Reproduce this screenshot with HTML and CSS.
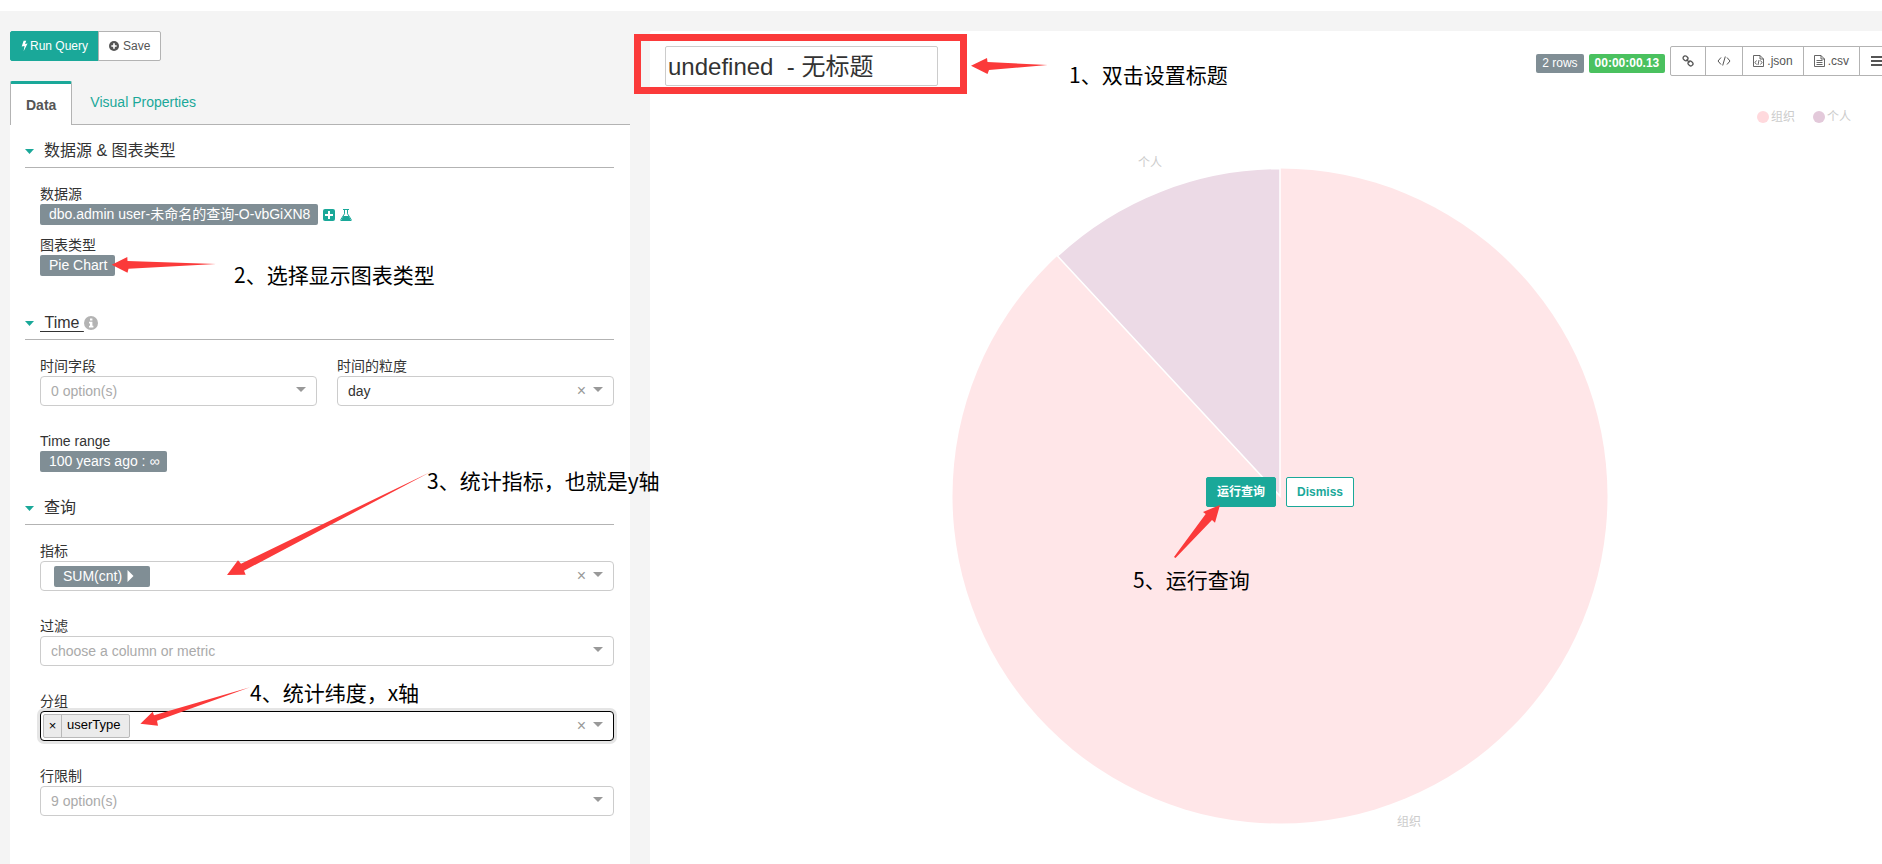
FILE: index.html
```html
<!DOCTYPE html>
<html lang="zh">
<head>
<meta charset="utf-8">
<title>undefined - 无标题</title>
<link rel="stylesheet" href="styles.css">
</head>
<body>
<main class="page">
  <section class="controls">
    <div class="btn-group">
      <button class="btn btn-primary" type="button"><svg class="bolt" width="7" height="12" viewBox="0 0 8 12"><path d="M3 0h3L4.600 3.600 7.500 3 3 12l1-6L.8 6.700z" fill="currentColor"/></svg>Run Query</button>
      <button class="btn" type="button"><svg width="10" height="10" viewBox="0 0 12 12"><circle cx="6" cy="6" r="6" fill="currentColor"/><path d="M6 2.800v6.400M2.800 6h6.400" stroke="#fff" stroke-width="2"/></svg>Save</button>
    </div>
    <nav class="tabs">
      <a class="tab active" href="#data">Data</a>
      <a class="tab" href="#visual">Visual Properties</a>
    </nav>
    <div class="panel">
      <section class="group group-source">
        <h2 class="group-title"><svg class="caret" width="9" height="5" viewBox="0 0 9 5"><path d="M0 0h9L4.500 5z" fill="currentColor"/></svg><span>数据源 &amp; 图表类型</span></h2>
        <div class="group-body tight">
          <div class="field">
            <span class="label">数据源</span>
            <div class="badge-row">
              <button class="badge" type="button">dbo.admin user-未命名的查询-O-vbGiXN8</button>
              <svg width="12" height="12" viewBox="0 0 12 12"><rect width="12" height="12" rx="2" fill="#1aa899"/><path d="M6 2v8M2 6h8" stroke="#fff" stroke-width="2"/></svg>
              <svg width="12" height="12" viewBox="0 0 12 12"><path d="M3 .5h6M4.500 .5v4.300L.8 10.500v1h10.400v-1L7.500 4.800V.5" fill="none" stroke="#1aa899"/><path d="M3.300 7h5.400l2.300 4.500H1z" fill="#1aa899"/></svg>
            </div>
          </div>
          <div class="field">
            <span class="label">图表类型</span>
            <div class="badge-row"><button class="badge" type="button">Pie Chart</button></div>
          </div>
        </div>
      </section>

      <section class="group">
        <h2 class="group-title"><svg class="caret" width="9" height="5" viewBox="0 0 9 5"><path d="M0 0h9L4.500 5z" fill="currentColor"/></svg><span class="underlined">&nbsp;Time&nbsp;</span><svg width="14" height="14" viewBox="0 0 14 14"><circle cx="7" cy="7" r="7" fill="#b3b3b3"/><path d="M6 2.500h2.400v2H6zM5 5.800h3.400v4h1v1.700H5V9.800h1V7.500H5z" fill="#fff"/></svg></h2>
        <div class="group-body">
          <div class="columns">
            <div class="field">
              <label class="label" for="time-column">时间字段</label>
              <div class="select">
                <select id="time-column" class="muted"><option>0 option(s)</option></select>
                <svg class="arrow" width="10" height="5" viewBox="0 0 10 5"><path d="M0 0h10L5 5z" fill="#999"/></svg>
              </div>
            </div>
            <div class="field">
              <label class="label" for="grain">时间的粒度</label>
              <div class="select">
                <select id="grain"><option>day</option></select>
                <button class="clear" type="button" aria-label="Clear">×</button>
                <svg class="arrow" width="10" height="5" viewBox="0 0 10 5"><path d="M0 0h10L5 5z" fill="#999"/></svg>
              </div>
            </div>
          </div>
          <div class="field">
            <span class="label">Time range</span>
            <div class="badge-row"><button class="badge" type="button">100 years ago : ∞</button></div>
          </div>
        </div>
      </section>

      <section class="group">
        <h2 class="group-title"><svg class="caret" width="9" height="5" viewBox="0 0 9 5"><path d="M0 0h9L4.500 5z" fill="currentColor"/></svg><span>查询</span></h2>
        <div class="group-body">
          <div class="field">
            <label class="label" for="metric">指标</label>
            <div class="select">
              <button class="badge metric" type="button">SUM(cnt)<svg width="7" height="12" viewBox="0 0 6 12"><path d="M0 0l6 6-6 6z" fill="#fff"/></svg></button>
              <input id="metric" type="text">
              <button class="clear" type="button" aria-label="Clear">×</button>
              <svg class="arrow" width="10" height="5" viewBox="0 0 10 5"><path d="M0 0h10L5 5z" fill="#999"/></svg>
            </div>
          </div>
          <div class="field">
            <label class="label" for="filter">过滤</label>
            <div class="select">
              <select id="filter" class="muted"><option>choose a column or metric</option></select>
              <svg class="arrow" width="10" height="5" viewBox="0 0 10 5"><path d="M0 0h10L5 5z" fill="#999"/></svg>
            </div>
          </div>
          <div class="field">
            <label class="label" for="groupby">分组</label>
            <div class="select focused">
              <span class="tag"><button type="button" aria-label="Remove">×</button><span>userType</span></span>
              <input id="groupby" type="text">
              <button class="clear" type="button" aria-label="Clear">×</button>
              <svg class="arrow" width="10" height="5" viewBox="0 0 10 5"><path d="M0 0h10L5 5z" fill="#999"/></svg>
            </div>
          </div>
          <div class="field">
            <label class="label" for="limit">行限制</label>
            <div class="select">
              <select id="limit" class="muted"><option>9 option(s)</option></select>
              <svg class="arrow" width="10" height="5" viewBox="0 0 10 5"><path d="M0 0h10L5 5z" fill="#999"/></svg>
            </div>
          </div>
        </div>
      </section>
    </div>
  </section>

  <section class="card">
    <header class="card-header">
      <input class="title" type="text" aria-label="标题" value="undefined&nbsp; - 无标题">
      <div class="actions">
        <span class="stat">2 rows</span>
        <span class="stat stat-time">00:00:00.13</span>
        <div class="btn-group">
          <button class="btn btn-icon" type="button" aria-label="Link"><svg width="12" height="12" viewBox="0 0 12 12"><g fill="none" stroke="currentColor" stroke-width="1.300"><rect x="1" y="1.200" width="5" height="4.200" rx="2" transform="rotate(40 3.500 3.300)"/><rect x="6" y="6.400" width="5" height="4.200" rx="2" transform="rotate(40 8.500 8.500)"/><path d="M4.500 4.500l3 3"/></g></svg></button>
          <button class="btn btn-icon" type="button" aria-label="Embed"><svg width="14" height="12" viewBox="0 0 14 12"><path d="M4 2.500L1 6l3 3.500M10 2.500L13 6l-3 3.500M8.300 1.500l-2.600 9" fill="none" stroke="currentColor"/></svg></button>
          <button class="btn" type="button"><svg width="11" height="12" viewBox="0 0 11 12"><path d="M.5.5h6.500l3.500 3.500v7.500H.5zM7 .5V4h3.500M3.500 5.500L2 7.500l1.500 2M7.500 5.500L9 7.500l-1.500 2M6 5l-1 5" fill="none" stroke="currentColor" stroke-width=".9"/></svg>.json</button>
          <button class="btn" type="button"><svg width="11" height="12" viewBox="0 0 11 12"><path d="M.5.5h6.500l3.500 3.500v7.500H.5zM7 .5V4h3.500M2.500 5.500h6M2.500 7.500h6M2.500 9.500h6" fill="none" stroke="currentColor" stroke-width=".9"/></svg>.csv</button>
          <button class="btn btn-icon" type="button" aria-label="Menu"><svg width="12" height="10" viewBox="0 0 12 10"><path d="M0 1h12M0 5h12M0 9h12" stroke="currentColor" stroke-width="2"/></svg></button>
        </div>
      </div>
    </header>
    <ul class="legend">
      <li><i class="dot dot-org"></i>组织</li>
      <li><i class="dot dot-person"></i>个人</li>
    </ul>
    <div class="chart">
      <svg width="720" height="720" viewBox="0 0 720 720">
        <circle cx="360" cy="360" r="327.500" fill="#ffe6e8"/>
        <path d="M360 360V32.500A327.500 327.500 0 0 0 137.500 120z" fill="#ecdae6" stroke="#fff" stroke-width="1.500"/>
        <text class="slice-label" x="218" y="31">个人</text>
        <text class="slice-label" x="477" y="690">组织</text>
      </svg>
      <div class="overlay">
        <button class="btn btn-primary strong" type="button">运行查询</button>
        <button class="btn btn-outline strong" type="button">Dismiss</button>
      </div>
    </div>
  </section>

  <div class="notes">
    <svg class="arrows" width="1250" height="740" viewBox="0 0 1250 740" fill="#fb3a3a">
      <path d="M637.500 37.500h326v53h-326z" fill="none" stroke="#fb3a3a" stroke-width="7"/>
      <path d="M971 65.700L987 58l.5 4 60 3-58.500 5-1.500 4z"/>
      <path d="M111.700 264.700L127.300 257l.2 4 88.500 3-87.500 4.700-1 4z"/>
      <path d="M227 575l11-14.700 3 3.400 190-92-187 99 1.700 4z"/>
      <path d="M140.400 723.700l12.300-12 1.300 3.600 96-28-93 33.400 1 5z"/>
      <path d="M1220 505l-17 7 2.700 2-31.700 43 1.500 1L1212 520l3 2.700z"/>
    </svg>
    <p class="note note-1">1、双击设置标题</p>
    <p class="note note-2">2、选择显示图表类型</p>
    <p class="note note-3">3、统计指标，也就是y轴</p>
    <p class="note note-4">4、统计纬度，x轴</p>
    <p class="note note-5">5、运行查询</p>
  </div>
</main>
</body>
</html>
```

FILE: styles.css
```css
* { box-sizing: border-box; }

body {
  margin: 0;
  background: #f4f4f4;
  border-top: 11px solid #fff;
  color: #333;
  font: 14px/20px "Liberation Sans", Arial, "Noto Sans CJK SC", sans-serif;
  overflow: hidden;
}

button, input, select { font: inherit; color: inherit; margin: 0; }
h2, p, ul { margin: 0; padding: 0; }

.page {
  display: grid;
  grid-template-columns: minmax(0, 155fr) minmax(0, 308fr);
  gap: 20px;
  min-height: calc(100vh - 11px);
  padding: 20px 0 0 10px;
}

.controls { display: flex; flex-direction: column; }

/* Buttons */
.btn-group { display: flex; }
.btn {
  display: inline-flex;
  align-items: center;
  justify-content: center;
  gap: 4px;
  height: 30px;
  padding: 0 10px;
  border: 1px solid #b3b3b3;
  background: #fff;
  color: #555;
  font-size: 12px;
  line-height: 18px;
  white-space: nowrap;
}
.btn-group .btn + .btn { margin-left: -1px; }
.btn-group .btn:first-child { border-radius: 2px 0 0 2px; }
.btn-group .btn:last-child { border-radius: 0 2px 2px 0; }
.btn-primary { background: #1aa899; border-color: #1aa899; color: #fff; }
.btn-outline { border-color: #1aa899; color: #1aa899; }
.strong { border-radius: 2px; font-weight: bold; }
.bolt { margin-right: -2px; }

/* Tabs */
.tabs {
  display: flex;
  margin-top: 20px;
  border-bottom: 1px solid #b3b3b3;
}
.tab {
  padding: 11px 18px;
  color: #1aa899;
  text-decoration: none;
}
.tab.active {
  margin-bottom: -1px;
  padding: 11px 15px 10px;
  border: 1px solid #b3b3b3;
  border-top: 3px solid #1aa899;
  border-bottom: 0;
  border-radius: 2px 2px 0 0;
  background: #fff;
  color: #555;
  font-weight: bold;
}

/* Control groups */
.panel { flex: 1; padding: 14px 16px 14px 15px; background: #fff; }
.group { margin-bottom: 24px; }
.group-source { margin-bottom: 35px; }
.group-title {
  display: flex;
  align-items: center;
  padding: 1px 0 5px;
  border-bottom: 1px solid #b3b3b3;
  font-size: 16px;
  font-weight: normal;
  line-height: 22px;
}
.caret { margin-right: 10px; color: #1aa899; }
.underlined { margin-left: -4px; text-decoration: underline; text-underline-offset: 3px; }
.group-body {
  display: flex;
  flex-direction: column;
  gap: 25px;
  padding: 16px 0 0 15px;
}
.group-body.tight { gap: 10px; }
.columns { display: grid; grid-template-columns: 1fr 1fr; gap: 20px; }
.label { display: block; }
.badge-row { display: flex; align-items: center; gap: 5px; }
.badge {
  height: 21px;
  padding: 0 8px 1px 9px;
  border: 0;
  border-radius: 2px;
  background: #808e95;
  color: #fff;
  white-space: nowrap;
}

/* Select boxes */
.select {
  display: flex;
  align-items: center;
  height: 30px;
  border: 1px solid #ccc;
  border-radius: 4px;
  background: #fff;
}
.select select, .select input {
  flex: 1;
  min-width: 0;
  height: 28px;
  padding: 0 10px;
  border: 0;
  outline: 0;
  appearance: none;
  background: transparent;
}
.select .muted { color: #aaa; }
.select.focused { border-color: #000; box-shadow: 0 0 0 3px #e5e5e5; }
.clear {
  padding: 0;
  border: 0;
  background: none;
  color: #999;
  font-size: 16px;
  line-height: 20px;
}
.arrow { margin: 0 10px 3px 7px; }
.metric {
  display: flex;
  align-items: center;
  gap: 5px;
  margin-left: 13px;
  padding-right: 16px;
}
.tag {
  display: flex;
  height: 24px;
  margin-left: 2px;
  border: 1px solid #b9b9b9;
  border-radius: 2px;
  background: #ebebeb;
  color: #000;
  font-size: 13px;
  line-height: 20px;
}
.tag button {
  width: 18px;
  padding: 0;
  border: 0;
  border-right: 1px solid #b9b9b9;
  background: none;
  line-height: 18px;
}
.tag span { padding: 0 9px 0 5px; }

/* Chart card */
.card {
  display: flex;
  flex-direction: column;
  margin-right: -28px;
  padding: 15px;
  border-radius: 2px;
  background: #fff;
}
.card-header { display: flex; justify-content: space-between; align-items: flex-start; }
.title {
  width: 273px;
  height: 40px;
  padding: 0 2px 4px;
  border: 1px solid #ccc;
  border-radius: 2px;
  font-size: 24px;
}
.actions { display: flex; align-items: flex-end; gap: 5px; }
.actions .btn { gap: 3px; }
.actions .btn-icon { padding: 0 11px; }
.stat {
  margin-bottom: 3px;
  padding: 0 6px;
  border-radius: 2px;
  background: #808e95;
  color: #fff;
  font-size: 12px;
  line-height: 19px;
}
.stat-time { background: #4ac15f; font-weight: bold; }
.legend {
  display: flex;
  justify-content: flex-end;
  gap: 18px;
  margin: 22px 44px 0 0;
  list-style: none;
  color: #ccc;
  font-size: 12px;
  line-height: 18px;
}
.legend li { display: flex; align-items: center; gap: 2px; }
.dot { width: 12px; height: 12px; border-radius: 50%; }
.dot-org { background: #ffd9dd; }
.dot-person { background: #e3c9da; }
.chart {
  position: relative;
  display: flex;
  justify-content: center;
  margin-top: 10px;
}
.slice-label { fill: #ccc; font-size: 12px; }
.overlay {
  position: absolute;
  top: 341px;
  left: 0;
  right: 0;
  display: flex;
  justify-content: center;
  gap: 10px;
}

/* Annotations laid over the page */
.notes { position: absolute; top: 0; left: 0; pointer-events: none; }
.arrows { display: block; }
.note {
  position: absolute;
  color: #000;
  font: 21px/30px "Noto Sans CJK SC", sans-serif;
  white-space: nowrap;
}
.note-1 { left: 1069px; top: 59px; }
.note-2 { left: 234px; top: 259px; }
.note-3 { left: 427px; top: 465px; }
.note-4 { left: 250px; top: 677px; }
.note-5 { left: 1133px; top: 564px; }
```
